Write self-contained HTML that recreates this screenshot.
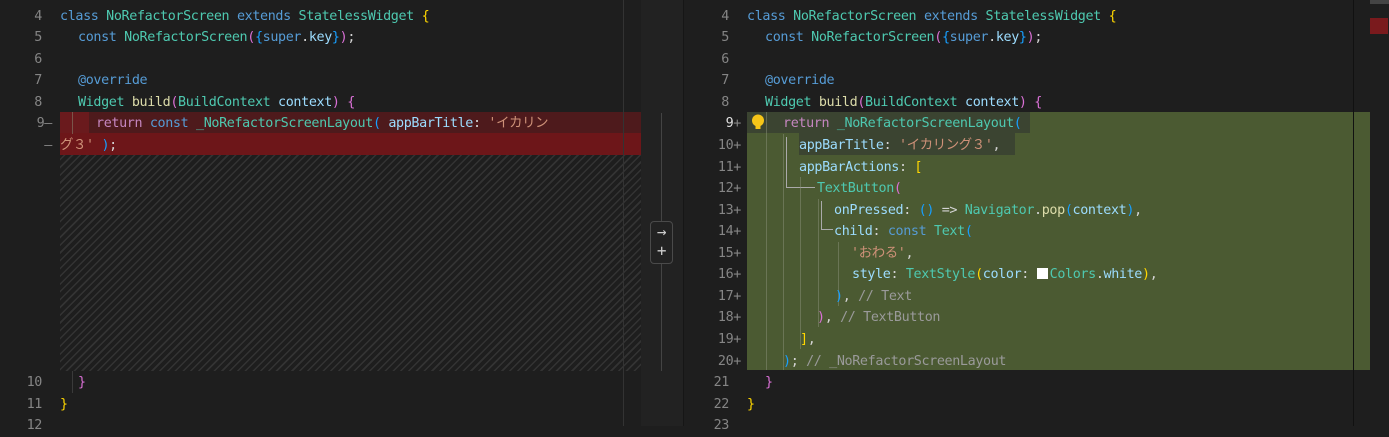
<!DOCTYPE html>
<html><head><meta charset="utf-8"><style>
*{margin:0;padding:0;box-sizing:border-box}
body{width:1389px;height:426px;background:#1e1e1e;position:relative;overflow:hidden;font-family:"DejaVu Sans Mono","Liberation Mono","Noto Sans CJK JP",monospace;font-size:13.4px;letter-spacing:-0.37px;color:#d4d4d4}
.a{position:absolute}
.l{position:absolute;white-space:pre;height:21.56px;line-height:21.56px;margin-top:1.5px}
.n{position:absolute;white-space:pre;line-height:21.56px;color:#858585;text-align:right;width:40px;margin-top:1.5px}
.k{color:#569cd6}.c{color:#4ec9b0}.y{color:#ffd700}.p{color:#da70d6}.b{color:#179fff}
.v{color:#9cdcfe}.s{color:#ce9178}.f{color:#dcdcaa}.r{color:#c586c0}.m{color:#9a9a9a}.w{color:#d4d4d4}
.g{position:absolute;width:1px;background:#8a8f78}
</style></head><body>
<div class="a" style="left:60px;top:111.8px;width:581px;height:21.6px;background:#4e1a1c"></div>
<div class="a" style="left:60px;top:133.4px;width:581px;height:21.6px;background:#6d1619"></div>
<div class="a" style="left:60px;top:111.8px;width:29px;height:21.6px;background:#6a1a1d"></div>
<div class="a" style="left:60px;top:155px;width:581px;height:215.5px;background:repeating-linear-gradient(-45deg,#1e1e1e 0 4px,#333 4px 5.5px)"></div>
<div class="a" style="left:623px;top:0;width:1px;height:426px;background:#333"></div>
<div class="a" style="left:641px;top:0;width:42px;height:426px;background:#222"></div>
<div class="a" style="left:683px;top:0;width:1px;height:426px;background:#161616"></div>
<div class="a" style="left:661px;top:113px;width:1px;height:258px;background:#444"></div>
<div class="a" style="left:650px;top:221px;width:23px;height:43px;border:1px solid #4a4a4a;border-radius:4px;background:#222;color:#ccc;font-size:16px;line-height:19px;text-align:center">→<br>+</div>
<div class="a" style="left:747px;top:111.8px;width:623px;height:258.7px;background:#4b5a32"></div>
<div class="a" style="left:747px;top:111.8px;width:283px;height:21.6px;background:#3b4431"></div>
<div class="a" style="left:799px;top:133.4px;width:216px;height:21.6px;background:#3b4431"></div>
<div class="a" style="left:1353px;top:0;width:1px;height:426px;background:#111"></div>
<div class="a" style="left:1370px;top:0;width:19px;height:4px;background:#444"></div>
<div class="a" style="left:1370px;top:18px;width:18px;height:16px;background:#7a1a1d"></div>
<div class="a" style="left:751px;top:114px;width:14px;height:17px;"><svg width="14" height="17" viewBox="0 0 14 17"><circle cx="7" cy="6.5" r="6" fill="#f5c518"/><rect x="4.5" y="11" width="5" height="4" fill="#f5c518"/></svg></div>
<div class="g" style="left:766px;top:112px;height:258px;opacity:.5"></div>
<div class="g" style="left:783px;top:134px;height:236px;opacity:.5"></div>
<div class="g" style="left:786px;top:137px;height:38px;background:#aaa"></div>
<div class="g" style="left:786px;top:175px;height:12px;background:#aaa"></div>
<div class="a" style="left:786px;top:187px;width:29px;height:1px;background:#aaa"></div>
<div class="g" style="left:800px;top:177px;height:172px;opacity:.5"></div>
<div class="g" style="left:818px;top:199px;height:128px;opacity:.5"></div>
<div class="g" style="left:821px;top:201px;height:28px;background:#aaa"></div>
<div class="a" style="left:821px;top:229px;width:12px;height:1px;background:#aaa"></div>
<div class="g" style="left:838px;top:242px;height:64px;opacity:.5"></div>
<div class="g" style="left:72px;top:112px;height:22px;opacity:.5"></div>
<div class="g" style="left:72px;top:371px;height:22px;opacity:.5;background:#555"></div>

<div class="n" style="left:2px;top:4px">4</div>
<div class="n" style="left:2px;top:25.6px">5</div>
<div class="n" style="left:2px;top:47.1px">6</div>
<div class="n" style="left:2px;top:68.7px">7</div>
<div class="n" style="left:2px;top:90.2px">8</div>
<div class="n" style="left:12px;top:111.8px">9—</div>
<div class="n" style="left:12px;top:133.4px">—</div>
<div class="n" style="left:2px;top:370.5px">10</div>
<div class="n" style="left:2px;top:392.1px">11</div>
<div class="n" style="left:2px;top:413.6px">12</div>
<div class="l" style="left:60px;top:4px"><span class="k">class</span> <span class="c">NoRefactorScreen</span> <span class="k">extends</span> <span class="c">StatelessWidget</span> <span class="y">{</span></div>
<div class="l" style="left:78px;top:25.6px"><span class="k">const</span> <span class="c">NoRefactorScreen</span><span class="p">(</span><span class="b">{</span><span class="k">super</span>.<span class="v">key</span><span class="b">}</span><span class="p">)</span>;</div>
<div class="l" style="left:78px;top:68.7px"><span class="k">@override</span></div>
<div class="l" style="left:78px;top:90.2px"><span class="c">Widget</span> <span class="f">build</span><span class="p">(</span><span class="c">BuildContext</span> <span class="v">context</span><span class="p">)</span> <span class="p">{</span></div>
<div class="l" style="left:96px;top:111.8px"><span class="r">return</span> <span class="k">const</span> <span class="c">_NoRefactorScreenLayout</span><span class="b">(</span> <span class="v">appBarTitle</span>: <span class="s">'イカリン</span></div>
<div class="l" style="left:60px;top:133.4px"><span class="s">グ３'</span> <span class="b">)</span>;</div>
<div class="l" style="left:78px;top:370.5px"><span class="p">}</span></div>
<div class="l" style="left:60px;top:392.1px"><span class="y">}</span></div>

<div class="n" style="left:689px;top:4px">4</div>
<div class="n" style="left:689px;top:25.6px">5</div>
<div class="n" style="left:689px;top:47.1px">6</div>
<div class="n" style="left:689px;top:68.7px">7</div>
<div class="n" style="left:689px;top:90.2px">8</div>
<div class="n" style="left:701px;top:111.8px;color:#e0e0e0">9<span style="color:#858585">+</span></div>
<div class="n" style="left:701px;top:133.4px">10+</div>
<div class="n" style="left:701px;top:155px">11+</div>
<div class="n" style="left:701px;top:176.5px">12+</div>
<div class="n" style="left:701px;top:198px">13+</div>
<div class="n" style="left:701px;top:219.6px">14+</div>
<div class="n" style="left:701px;top:241.2px">15+</div>
<div class="n" style="left:701px;top:262.7px">16+</div>
<div class="n" style="left:701px;top:284.3px">17+</div>
<div class="n" style="left:701px;top:305.8px">18+</div>
<div class="n" style="left:701px;top:327.4px">19+</div>
<div class="n" style="left:701px;top:349px">20+</div>
<div class="n" style="left:689px;top:370.5px">21</div>
<div class="n" style="left:689px;top:392.1px">22</div>
<div class="n" style="left:689px;top:413.6px">23</div>
<div class="l" style="left:747px;top:4px"><span class="k">class</span> <span class="c">NoRefactorScreen</span> <span class="k">extends</span> <span class="c">StatelessWidget</span> <span class="y">{</span></div>
<div class="l" style="left:765px;top:25.6px"><span class="k">const</span> <span class="c">NoRefactorScreen</span><span class="p">(</span><span class="b">{</span><span class="k">super</span>.<span class="v">key</span><span class="b">}</span><span class="p">)</span>;</div>
<div class="l" style="left:765px;top:68.7px"><span class="k">@override</span></div>
<div class="l" style="left:765px;top:90.2px"><span class="c">Widget</span> <span class="f">build</span><span class="p">(</span><span class="c">BuildContext</span> <span class="v">context</span><span class="p">)</span> <span class="p">{</span></div>
<div class="l" style="left:783px;top:111.8px"><span class="r">return</span> <span class="c">_NoRefactorScreenLayout</span><span class="b">(</span></div>
<div class="l" style="left:799px;top:133.4px"><span class="v">appBarTitle</span>: <span class="s">'イカリング３'</span>,</div>
<div class="l" style="left:799px;top:155px"><span class="v">appBarActions</span>: <span class="y">[</span></div>
<div class="l" style="left:817px;top:176.5px"><span class="c">TextButton</span><span class="p">(</span></div>
<div class="l" style="left:834px;top:198px"><span class="v">onPressed</span>: <span class="b">()</span> =&gt; <span class="c">Navigator</span>.<span class="f">pop</span><span class="b">(</span><span class="v">context</span><span class="b">)</span>,</div>
<div class="l" style="left:834px;top:219.6px"><span class="v">child</span>: <span class="k">const</span> <span class="c">Text</span><span class="b">(</span></div>
<div class="l" style="left:851px;top:241.2px"><span class="s">'おわる'</span>,</div>
<div class="l" style="left:852px;top:262.7px"><span class="v">style</span>: <span class="c">TextStyle</span><span class="y">(</span><span class="v">color</span>: <span style="display:inline-block;width:11px;height:11px;background:#fff;vertical-align:-1px;margin-right:2px"></span><span class="c">Colors</span>.<span class="v">white</span><span class="y">)</span>,</div>
<div class="l" style="left:835px;top:284.3px"><span class="b">)</span>, <span class="m">// Text</span></div>
<div class="l" style="left:817px;top:305.8px"><span class="p">)</span>, <span class="m">// TextButton</span></div>
<div class="l" style="left:800px;top:327.4px"><span class="y">]</span>,</div>
<div class="l" style="left:783px;top:349px"><span class="b">)</span>; <span class="m">// _NoRefactorScreenLayout</span></div>
<div class="l" style="left:765px;top:370.5px"><span class="p">}</span></div>
<div class="l" style="left:747px;top:392.1px"><span class="y">}</span></div>
</body></html>
